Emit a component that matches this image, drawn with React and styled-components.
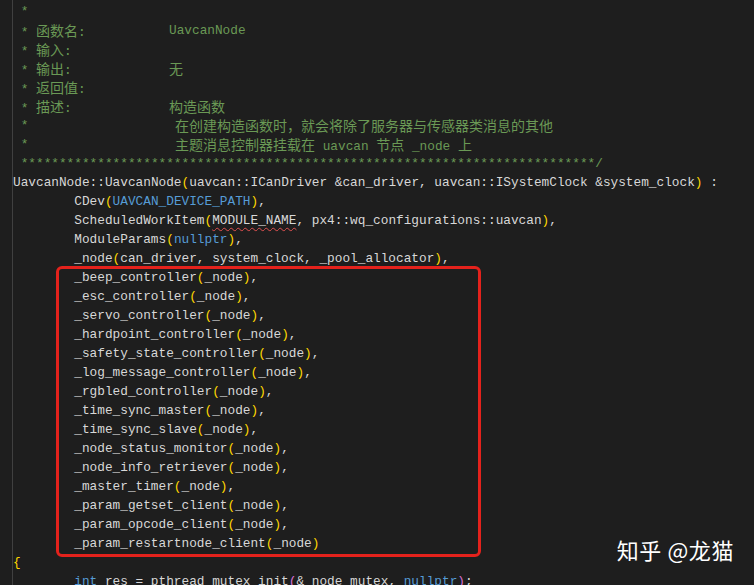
import React from "react";
import styled, { createGlobalStyle } from "styled-components";

const Global = createGlobalStyle`
  html, body { margin: 0; padding: 0; background: #1e1e1e; }
  #root { width: 754px; height: 585px; }
`;

const COLORS = {
  text: "#d8d8d8",
  comment: "#6a9955",
  paren: "#ffd700",
  paren2: "#da70d6",
  kw: "#569cd6",
  macro: "#569cd6",
};

const Editor = styled.div`
  position: relative;
  width: 754px;
  height: 585px;
  overflow: hidden;
  background: #1e1e1e;
  padding-left: 12px;
  box-sizing: border-box;
`;

const Lines = styled.div`
  border-left: 1px solid #404040;
  height: 100%;
  padding-top: 1.5px;
  box-sizing: border-box;
  font-family: "Liberation Mono", "DejaVu Sans Mono", monospace;
  font-size: 12.77px;
  color: ${COLORS.text};
`;

const Line = styled.div`
  height: 19px;
  line-height: 19px;
  white-space: pre;
  padding-left: ${(p) => (p.$indent ? p.$indent * 7.66 : 0)}px;
`;

const CommentRow = styled.div`
  display: grid;
  grid-template-columns: 156px 1fr;
  height: 19px;
  line-height: 19px;
  white-space: pre;
  color: ${COLORS.comment};
`;

const Value = styled.span`
  padding-left: ${(p) => p.$offset || 0}px;
`;

const Cjk = styled.span`
  font-family: "Noto Sans CJK SC", sans-serif;
  font-size: 14px;
`;

const Tok = styled.span`
  color: ${(p) => COLORS[p.$k] || COLORS.text};
  ${(p) =>
    p.$squiggle
      ? `text-decoration: underline wavy #e05050; text-decoration-thickness: 1px; text-underline-offset: 3px;`
      : ""}
`;

const Highlight = styled.div`
  position: absolute;
  left: 56px;
  top: 266px;
  width: 425px;
  height: 291px;
  border: 3.5px solid #e4221c;
  border-radius: 6px;
  box-sizing: border-box;
  pointer-events: none;
`;

const Watermark = styled.div`
  position: absolute;
  right: 20px;
  top: 533px;
  font-family: "Noto Sans CJK SC", "Noto Sans", sans-serif;
  font-size: 22px;
  color: #ffffff;
  letter-spacing: 0.6px;
  white-space: pre;
`;

const Comment = ({ label, value, offset, children }) => (
  <CommentRow>
    <span>
      {" * "}
      {label && <Cjk>{label}</Cjk>}
      {label && ":"}
    </span>
    <Value $offset={offset}>{value || children}</Value>
  </CommentRow>
);

const P = ({ k = "paren", children }) => <Tok $k={k}>{children}</Tok>;

const members = [
  "_beep_controller",
  "_esc_controller",
  "_servo_controller",
  "_hardpoint_controller",
  "_safety_state_controller",
  "_log_message_controller",
  "_rgbled_controller",
  "_time_sync_master",
  "_time_sync_slave",
  "_node_status_monitor",
  "_node_info_retriever",
  "_master_timer",
  "_param_getset_client",
  "_param_opcode_client",
  "_param_restartnode_client",
];

export default function App() {
  return (
    <>
      <Global />
      <Editor>
        <Lines>
          <CommentRow>
            <span>{" *"}</span>
          </CommentRow>
          <Comment label="函数名" value="UavcanNode" />
          <Comment label="输入" />
          <Comment label="输出" value={<Cjk>无</Cjk>} />
          <Comment label="返回值" />
          <Comment label="描述" value={<Cjk>构造函数</Cjk>} />
          <Comment offset={6}>
            <Cjk>在创建构造函数时，就会将除了服务器与传感器类消息的其他</Cjk>
          </Comment>
          <Comment offset={6}>
            <Cjk>主题消息控制器挂载在</Cjk>
            {" uavcan "}
            <Cjk>节点</Cjk>
            {" _node "}
            <Cjk>上</Cjk>
          </Comment>
          <Line>
            <Tok $k="comment">{" " + "*".repeat(75) + "/"}</Tok>
          </Line>
          <Line>
            UavcanNode::UavcanNode<P>(</P>uavcan::ICanDriver &amp;can_driver,
            uavcan::ISystemClock &amp;system_clock<P>)</P> :
          </Line>
          <Line $indent={8}>
            CDev<P>(</P>
            <Tok $k="macro">UAVCAN_DEVICE_PATH</Tok>
            <P>)</P>,
          </Line>
          <Line $indent={8}>
            ScheduledWorkItem<P>(</P>
            <Tok $squiggle>MODULE_NAME</Tok>, px4::wq_configurations::uavcan
            <P>)</P>,
          </Line>
          <Line $indent={8}>
            ModuleParams<P>(</P>
            <Tok $k="kw">nullptr</Tok>
            <P>)</P>,
          </Line>
          <Line $indent={8}>
            _node<P>(</P>can_driver, system_clock, _pool_allocator<P>)</P>,
          </Line>
          {members.map((m, i) => (
            <Line $indent={8} key={m}>
              {m}
              <P>(</P>_node<P>)</P>
              {i < members.length - 1 ? "," : ""}
            </Line>
          ))}
          <Line>
            <P>{"{"}</P>
          </Line>
          <Line $indent={8}>
            <Tok $k="kw">int</Tok> res = pthread_mutex_init
            <P k="paren2">(</P>&amp;_node_mutex, <Tok $k="kw">nullptr</Tok>
            <P k="paren2">)</P>;
          </Line>
        </Lines>
        <Highlight />
        <Watermark>知乎 @龙猫</Watermark>
      </Editor>
    </>
  );
}
